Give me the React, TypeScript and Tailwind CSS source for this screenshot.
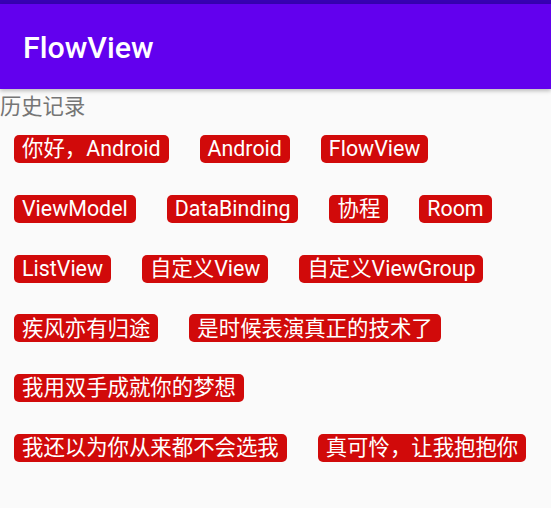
import React from "react";

const rows: string[][] = [
  ["你好，Android", "Android", "FlowView"],
  ["ViewModel", "DataBinding", "协程", "Room"],
  ["ListView", "自定义View", "自定义ViewGroup"],
  ["疾风亦有归途", "是时候表演真正的技术了"],
  ["我用双手成就你的梦想"],
  ["我还以为你从来都不会选我", "真可怜，让我抱抱你"],
];

export default function App() {
  return (
    <div
      className="w-[551px] h-[508px] bg-[#fafafa] overflow-hidden flex flex-col"
      style={{ fontFamily: 'Roboto, "Noto Sans CJK SC", sans-serif' }}
    >
      <div className="h-[4px] bg-[#3700b3] shrink-0" />
      <div className="h-[85px] bg-[#6200ee] shrink-0 flex items-center pl-[23px] pt-[3px] shadow-[0_2px_4px_rgba(0,0,0,0.25)] relative z-10">
        <span className="text-white text-[30.4px] font-medium leading-none">FlowView</span>
      </div>
      <div className="text-[#757575] text-[21.3px] leading-[28px] pt-[4px]">历史记录</div>
      <div className="flex flex-col gap-[31.8px] pl-[14px] pt-[14px]">
        {rows.map((row, i) => (
          <div key={i} className="flex gap-[31px]">
            {row.map((t) => (
              <div
                key={t}
                className="h-[28px] px-[8px] rounded-[5px] bg-[#d10a0a] text-white text-[21.4px] leading-none flex items-center whitespace-nowrap"
              >
                {t}
              </div>
            ))}
          </div>
        ))}
      </div>
    </div>
  );
}
